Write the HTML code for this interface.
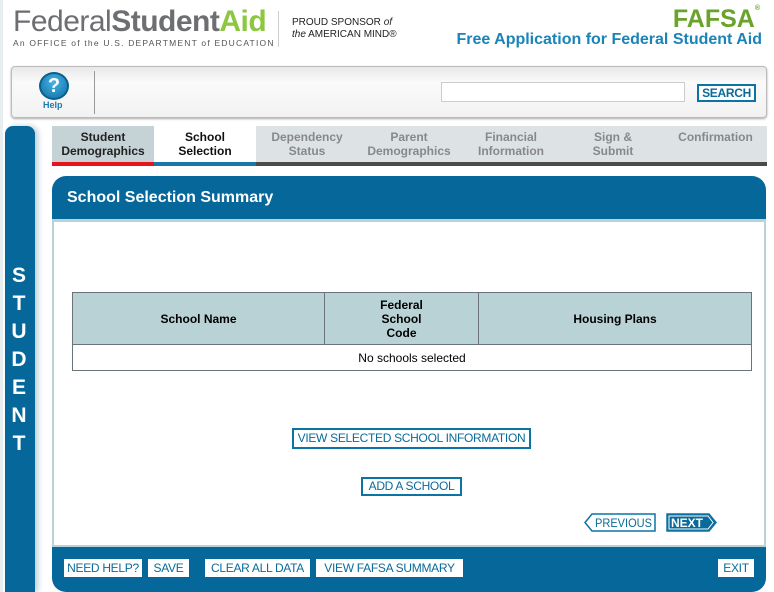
<!DOCTYPE html>
<html><head><style>
*{margin:0;padding:0;box-sizing:border-box}
body{width:774px;height:592px;background:#fff;font-family:"Liberation Sans",Arial,sans-serif;position:relative;overflow:hidden}
.a{position:absolute}
.btn{position:absolute;border:2px solid #0a74a6;color:#0a6a9a;background:#fff;font-size:12px;font-family:"Liberation Sans",sans-serif;text-align:center;line-height:15px;letter-spacing:-0.3px}
.fb{position:absolute;top:559px;height:18px;background:#fff;color:#0a6a9a;font-size:12px;line-height:18px;text-align:center;letter-spacing:-0.3px}
.tab{position:absolute;top:126px;height:40px;width:102px;text-align:center;font-weight:bold;font-size:12px;line-height:14px;padding-top:4px;border-bottom:4px solid #4a4a4a;background:#dde3e4;color:#888}
</style></head><body>
<div class="a" style="left:0;top:0;width:3px;height:592px;background:#e8eef0"></div>
<div class="a" style="left:13px;top:5px;font-size:30px;color:#6d6e71;letter-spacing:-0.5px">Federal<b>Student</b><b style="color:#8dc63f">Aid</b></div>
<div class="a" style="left:13px;top:38px;font-size:8.5px;color:#555;letter-spacing:1.2px">An OFFICE of the U.S. DEPARTMENT of EDUCATION</div>
<div class="a" style="left:278px;top:11px;width:1px;height:36px;background:#ccc"></div>
<div class="a" style="left:292px;top:17px;font-size:10px;color:#222;line-height:12px">PROUD SPONSOR <i>of</i><br><i>the</i> AMERICAN MIND®</div>
<div class="a" style="right:14px;top:5px;font-size:25px;font-weight:bold;color:#6aa329">FAFSA<sup style="font-size:7px;vertical-align:top">®</sup></div>
<div class="a" style="right:12px;top:31px;font-size:16px;font-weight:bold;color:#1a84b8">Free Application for Federal Student Aid</div>
<div class="a" style="left:11px;top:66px;width:756px;height:52px;border:1px solid #bbb;border-radius:4px;background:linear-gradient(#e8e8e8,#fafafa 30%,#f2f2f2);box-shadow:0 1px 2px #aaa"></div>
<div class="a" style="left:39px;top:72px;width:30px;height:28px;border-radius:50%;background:radial-gradient(circle at 50% 35%,#4ab3e3,#0b6fa5);border:2px solid #0b5f8c;color:#fff;font-weight:bold;font-size:20px;text-align:center;line-height:24px">?</div>
<div class="a" style="left:43px;top:100px;font-size:9px;font-weight:bold;color:#1a7ab0">Help</div>
<div class="a" style="left:94px;top:71px;width:1px;height:43px;background:#999"></div>
<div class="a" style="left:441px;top:82px;width:244px;height:20px;border:1px solid #ccc;background:#fff"></div>
<div class="btn" style="left:697px;top:84px;width:59px;height:18px;font-weight:bold;font-size:12px">SEARCH</div>
<div class="a" style="left:5px;top:126px;width:30px;height:466px;background:#06679a;border-radius:8px 8px 0 0;box-shadow:3px 0 6px #b8d0d8"></div>
<div class="a" style="left:8px;top:262px;width:22px;font-size:21px;font-weight:bold;color:#fff;text-align:center;line-height:28px">S<br>T<br>U<br>D<br>E<br>N<br>T</div>
<div class="tab" style="left:52px;background:#c5d2d6;color:#222;border-color:#e8141c">Student<br>Demographics</div>
<div class="tab" style="left:154px;background:#fff;color:#111;border-color:#1a78a8">School<br>Selection</div>
<div class="tab" style="left:256px">Dependency<br>Status</div>
<div class="tab" style="left:358px">Parent<br>Demographics</div>
<div class="tab" style="left:460px">Financial<br>Information</div>
<div class="tab" style="left:562px">Sign &amp;<br>Submit</div>
<div class="tab" style="left:664px;width:103px">Confirmation</div>
<div class="a" style="left:52px;top:176px;width:714px;height:416px;background:#06679a;border-radius:14px 14px 14px 14px"></div>
<div class="a" style="left:67px;top:189px;font-size:16px;font-weight:bold;color:#fff">School Selection Summary</div>
<div class="a" style="left:52px;top:219px;width:714px;height:328px;background:#fff;border:2px solid #b9d2d6;border-top-width:3px"></div>
<div class="a" style="left:72px;top:292px;width:680px;height:79px;border:1px solid #6a7478"></div>
<div class="a" style="left:73px;top:293px;width:678px;height:52px;background:#b9d2d6;border-bottom:1px solid #6a7478"></div>
<div class="a" style="left:324px;top:293px;width:1px;height:52px;background:#6a7478"></div>
<div class="a" style="left:478px;top:293px;width:1px;height:52px;background:#6a7478"></div>
<div class="a" style="left:73px;top:312px;width:251px;text-align:center;font-size:12px;font-weight:bold">School Name</div>
<div class="a" style="left:325px;top:298px;width:153px;text-align:center;font-size:12px;font-weight:bold;line-height:14px">Federal<br>School<br>Code</div>
<div class="a" style="left:479px;top:312px;width:272px;text-align:center;font-size:12px;font-weight:bold">Housing Plans</div>
<div class="a" style="left:73px;top:351px;width:678px;text-align:center;font-size:12px">No schools selected</div>
<div class="btn" style="left:292px;top:428px;width:239px;height:21px;line-height:17px">VIEW SELECTED SCHOOL INFORMATION</div>
<div class="btn" style="left:361px;top:477px;width:101px;height:19px;line-height:15px">ADD A SCHOOL</div>
<svg class="a" style="left:584px;top:513px" width="72" height="19"><path d="M8 1H71V18H8L1 9.5Z" fill="#fff" stroke="#0a74a6" stroke-width="1.5"/><text x="11" y="14" font-size="11.5" fill="#0a6a9a" font-family="Liberation Sans" textLength="57" lengthAdjust="spacingAndGlyphs">PREVIOUS</text></svg>
<svg class="a" style="left:666px;top:513px" width="51" height="19"><path d="M1 1H43L50 9.5L43 18H1Z" fill="#0a6a9a" stroke="#0a74a6" stroke-width="1.5"/><path d="M3 3H42L47 9.5L42 16H3Z" fill="none" stroke="#fff" stroke-width="1"/><text x="5" y="14" font-size="12" font-weight="bold" fill="#fff" font-family="Liberation Sans" textLength="32" lengthAdjust="spacingAndGlyphs">NEXT</text></svg>
<div class="fb" style="left:64px;width:78px">NEED HELP?</div>
<div class="fb" style="left:148px;width:41px">SAVE</div>
<div class="fb" style="left:205px;width:105px">CLEAR ALL DATA</div>
<div class="fb" style="left:316px;width:147px">VIEW FAFSA SUMMARY</div>
<div class="fb" style="left:718px;width:36px">EXIT</div>
</body></html>
